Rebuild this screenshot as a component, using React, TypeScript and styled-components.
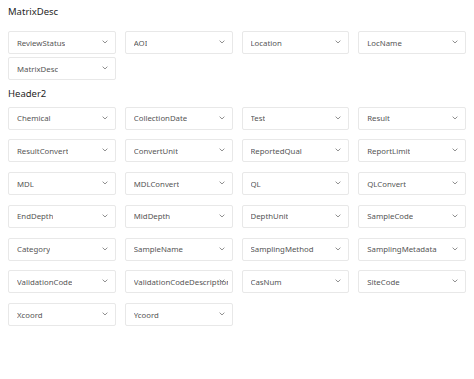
import React from 'react';
import styled, { createGlobalStyle } from 'styled-components';

const GlobalStyle = createGlobalStyle`
  html, body {
    margin: 0;
    padding: 0;
    background: #ffffff;
  }
  body {
    font-family: "Noto Sans", "Open Sans", Arial, sans-serif;
  }
`;

const sections = [
  {
    title: 'MatrixDesc',
    tight: true,
    fields: ['ReviewStatus', 'AOI', 'Location', 'LocName', 'MatrixDesc'],
  },
  {
    title: 'Header2',
    tight: false,
    fields: [
      'Chemical', 'CollectionDate', 'Test', 'Result',
      'ResultConvert', 'ConvertUnit', 'ReportedQual', 'ReportLimit',
      'MDL', 'MDLConvert', 'QL', 'QLConvert',
      'EndDepth', 'MidDepth', 'DepthUnit', 'SampleCode',
      'Category', 'SampleName', 'SamplingMethod', 'SamplingMetadata',
      'ValidationCode', 'ValidationCodeDescription', 'CasNum', 'SiteCode',
      'Xcoord', 'Ycoord',
    ],
  },
];

const Chevron = () => (
  <ChevronIcon viewBox="0 0 10 6" aria-hidden="true">
    <path d="M1.5 1.2 L5 4.6 L8.5 1.2" fill="none" stroke="currentColor" strokeWidth="1.3" strokeLinecap="round" strokeLinejoin="round" />
  </ChevronIcon>
);

const App = () => {
  return (
    <Page>
      <GlobalStyle />
      {sections.map((section) => (
        <Section key={section.title}>
          <Heading $tight={section.tight}>{section.title}</Heading>
          <FieldGrid $tight={section.tight}>
            {section.fields.map((name) => (
              <SelectBox key={name} tabIndex={0} role="combobox" aria-label={name}>
                <SelectLabel>{name}</SelectLabel>
                <Chevron />
              </SelectBox>
            ))}
          </FieldGrid>
        </Section>
      ))}
    </Page>
  );
};

const Page = styled.div`
  padding: 5px 8px 20px;
  width: 474px;
  box-sizing: border-box;
  display: flex;
  flex-direction: column;
  gap: 7px;
`;

const Section = styled.section``;

const Heading = styled.h3<{ $tight: boolean }>`
  margin: 0 0 ${(p) => (p.$tight ? '12px' : '5.5px')};
  font-size: 9.5px;
  line-height: 14px;
  font-weight: 400;
  color: #1f1f1f;
`;

const FieldGrid = styled.div<{ $tight: boolean }>`
  display: grid;
  grid-template-columns: repeat(4, 1fr);
  column-gap: 9px;
  row-gap: ${(p) => (p.$tight ? '3px' : '9.75px')};
`;

const SelectBox = styled.div`
  position: relative;
  height: 23px;
  box-sizing: border-box;
  border: 1px solid #e8e8e8;
  border-radius: 2px;
  background: #fff;
  padding: 0 4px 0 8px;
  display: flex;
  align-items: center;
  overflow: hidden;
  cursor: pointer;
`;

const SelectLabel = styled.span`
  font-size: 7.8px;
  color: #555;
  white-space: nowrap;
  overflow: hidden;
`;

const ChevronIcon = styled.svg`
  position: absolute;
  right: 7px;
  top: 8px;
  width: 6px;
  height: 4px;
  color: #707070;
`;

export default App;
